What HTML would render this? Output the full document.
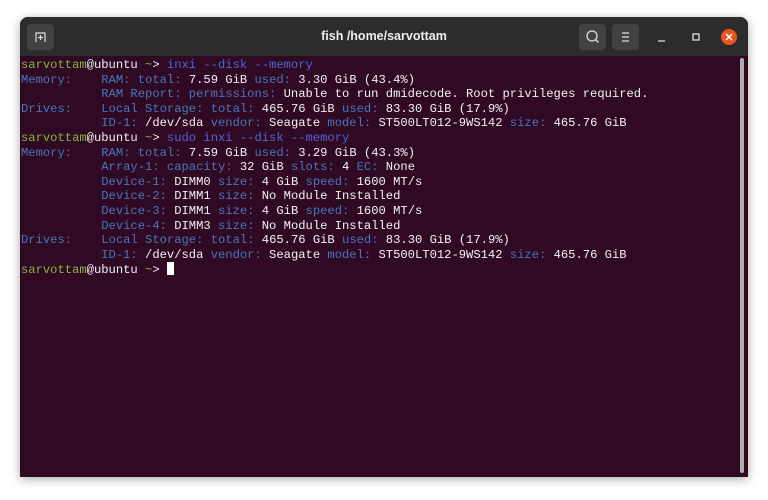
<!DOCTYPE html>
<html><head><meta charset="utf-8"><style>
body{margin:0;width:768px;height:500px;background:#fff;overflow:hidden;position:relative;font-family:"Liberation Sans",sans-serif}
.win{position:absolute;left:20px;top:17px;width:728px;height:460px;background:#300a24;border-radius:8px 8px 0 0;box-shadow:0 2px 10px rgba(0,0,0,.35);overflow:hidden}
.tb{position:absolute;left:0;top:0;width:728px;height:39px;background:#2c2c2c}
.btn{position:absolute;top:7px;width:27px;height:26px;background:#424242;border-radius:4px}
.title{position:absolute;left:0;width:728px;top:12px;text-align:center;color:#eee;font-weight:bold;font-size:12.5px}
pre{position:absolute;left:1px;top:41px;margin:0;font-family:"Liberation Mono",monospace;font-size:12.17px;line-height:14.6px;color:#f2f2f2}
.g{color:#8ab33a}.b{color:#4a76b8}.c{color:#4e67d0}
.sb{position:absolute;left:720px;top:41px;width:4px;height:415px;background:#b0acae;border-radius:2px}
.cur{display:inline-block;width:7px;height:13px;background:#fff;vertical-align:-2px}
</style></head><body>
<div class="win">
<div class="tb">
<div class="btn" style="left:7px"><svg width="27" height="26"><path d="M9 18V9h9v9M13.5 11v5M11 13.5h5" stroke="#ddd" stroke-width="1.2" fill="none"/></svg></div>
<div class="title">fish /home/sarvottam</div>
<div class="btn" style="left:559px"><svg width="27" height="26"><circle cx="13" cy="12" r="5" stroke="#ddd" stroke-width="1.3" fill="none"/><path d="M16.5 15.5l3 3" stroke="#ddd" stroke-width="1.5"/></svg></div>
<div class="btn" style="left:592px"><svg width="27" height="26"><path d="M10 9h7M10 13h7M10 17h7" stroke="#ddd" stroke-width="1.2"/></svg></div>
<svg style="position:absolute;left:630px;top:10px" width="98" height="22"><path d="M8 14h7" stroke="#ddd" stroke-width="1.3"/><rect x="43" y="7" width="6" height="6" stroke="#ddd" stroke-width="1.3" fill="none"/><circle cx="79" cy="10" r="8" fill="#e9541f"/><path d="M76 7l6 6M82 7l-6 6" stroke="#fff" stroke-width="1.5"/></svg>
</div>
<pre><span class="g">sarvottam</span>@ubuntu <span class="g">~</span>&gt; <span class="c">inxi --disk --memory</span>
<span class="b">Memory:</span>    <span class="b">RAM:</span> <span class="b">total:</span> 7.59 GiB <span class="b">used:</span> 3.30 GiB (43.4%)
           <span class="b">RAM Report:</span> <span class="b">permissions:</span> Unable to run dmidecode. Root privileges required.
<span class="b">Drives:</span>    <span class="b">Local Storage:</span> <span class="b">total:</span> 465.76 GiB <span class="b">used:</span> 83.30 GiB (17.9%)
           <span class="b">ID-1:</span> /dev/sda <span class="b">vendor:</span> Seagate <span class="b">model:</span> ST500LT012-9WS142 <span class="b">size:</span> 465.76 GiB
<span class="g">sarvottam</span>@ubuntu <span class="g">~</span>&gt; <span class="c">sudo inxi --disk --memory</span>
<span class="b">Memory:</span>    <span class="b">RAM:</span> <span class="b">total:</span> 7.59 GiB <span class="b">used:</span> 3.29 GiB (43.3%)
           <span class="b">Array-1:</span> <span class="b">capacity:</span> 32 GiB <span class="b">slots:</span> 4 <span class="b">EC:</span> None
           <span class="b">Device-1:</span> DIMM0 <span class="b">size:</span> 4 GiB <span class="b">speed:</span> 1600 MT/s
           <span class="b">Device-2:</span> DIMM1 <span class="b">size:</span> No Module Installed
           <span class="b">Device-3:</span> DIMM1 <span class="b">size:</span> 4 GiB <span class="b">speed:</span> 1600 MT/s
           <span class="b">Device-4:</span> DIMM3 <span class="b">size:</span> No Module Installed
<span class="b">Drives:</span>    <span class="b">Local Storage:</span> <span class="b">total:</span> 465.76 GiB <span class="b">used:</span> 83.30 GiB (17.9%)
           <span class="b">ID-1:</span> /dev/sda <span class="b">vendor:</span> Seagate <span class="b">model:</span> ST500LT012-9WS142 <span class="b">size:</span> 465.76 GiB
<span class="g">sarvottam</span>@ubuntu <span class="g">~</span>&gt; <span class="cur"></span></pre>
<div class="sb"></div>
</div>
</body></html>
